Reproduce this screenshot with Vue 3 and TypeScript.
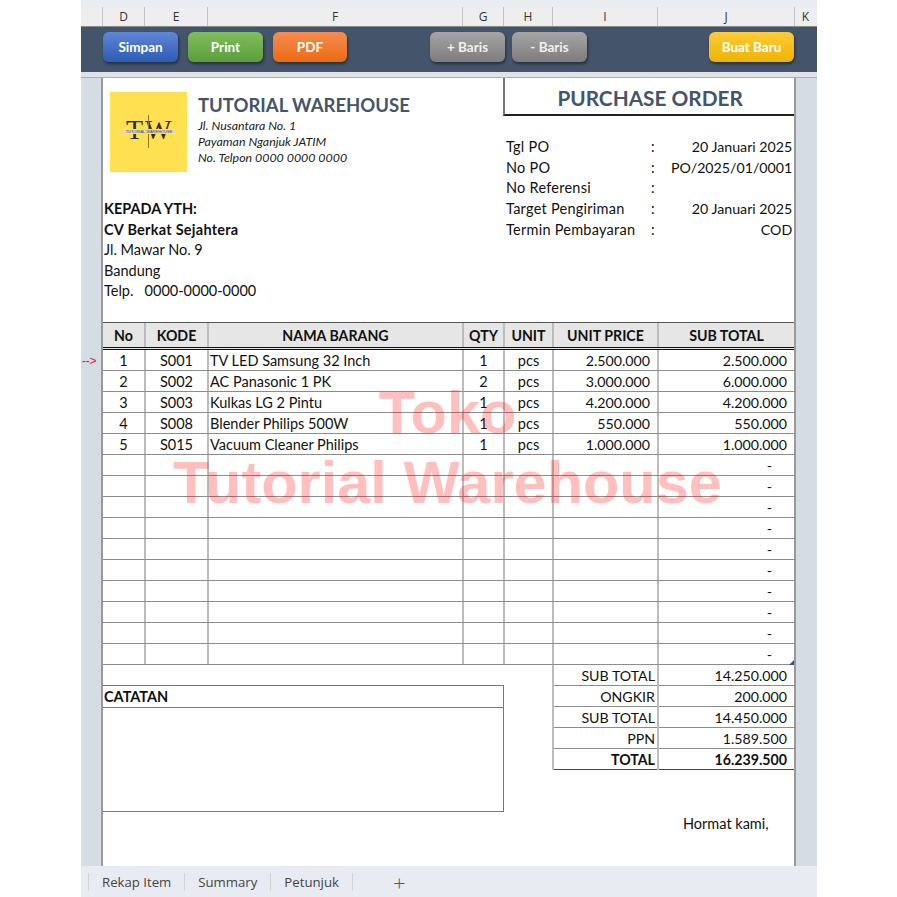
<script setup lang="ts">
const columns = [
  { label: 'D', width: 42 }, { label: 'E', width: 63 }, { label: 'F', width: 255 }, { label: 'G', width: 41 },
  { label: 'H', width: 49 }, { label: 'I', width: 105 }, { label: 'J', width: 137 }, { label: 'K', width: 22 },
]
const info = [
  ['Tgl PO', ':', '20 Januari 2025'],
  ['No PO', ':', 'PO/2025/01/0001'],
  ['No Referensi', ':', ''],
  ['Target Pengiriman', ':', '20 Januari 2025'],
  ['Termin Pembayaran', ':', 'COD'],
]
const heads = ['No', 'KODE', 'NAMA BARANG', 'QTY', 'UNIT', 'UNIT PRICE', 'SUB TOTAL']
const items = [
  ['1', 'S001', 'TV LED Samsung 32 Inch', '1', 'pcs', '2.500.000', '2.500.000'],
  ['2', 'S002', 'AC Panasonic 1 PK', '2', 'pcs', '3.000.000', '6.000.000'],
  ['3', 'S003', 'Kulkas LG 2 Pintu', '1', 'pcs', '4.200.000', '4.200.000'],
  ['4', 'S008', 'Blender Philips 500W', '1', 'pcs', '550.000', '550.000'],
  ['5', 'S015', 'Vacuum Cleaner Philips', '1', 'pcs', '1.000.000', '1.000.000'],
]
const blanks = Array.from({ length: 10 }, (_, i) => i)
const totals = [
  ['SUB TOTAL', '14.250.000', false],
  ['ONGKIR', '200.000', false],
  ['SUB TOTAL', '14.450.000', false],
  ['PPN', '1.589.500', false],
  ['TOTAL', '16.239.500', true],
] as const
const tabs = ['Rekap Item', 'Summary', 'Petunjuk']
</script>

<template>
  <div class="screen">
    <div class="app">
      <div class="strip"></div>
      <div class="colhead">
        <div class="corner"></div>
        <div v-for="c in columns" :key="c.label" class="colcell" :style="{ width: c.width + 'px' }">{{ c.label }}</div>
      </div>
      <div class="toolbar">
        <button class="btn blue">Simpan</button>
        <button class="btn green">Print</button>
        <button class="btn orange">PDF</button>
        <button class="btn gray add">+ Baris</button>
        <button class="btn gray minus">- Baris</button>
        <button class="btn yellow">Buat Baru</button>
      </div>
      <div class="band"></div>
      <div class="sheet">
        <div class="side left"><span class="arrow">--&gt;</span></div>
        <div class="page">
          <div class="head">
            <div class="head-left">
              <div class="brand">
                <div class="logo">
                  <span class="logo-letters">T W</span>
                  <span class="logo-bar"></span>
                  <span class="logo-strip">TUTORIAL WAREHOUSE</span>
                </div>
                <div class="brand-text">
                  <div class="company">TUTORIAL WAREHOUSE</div>
                  <div class="addr">Jl. Nusantara No. 1</div>
                  <div class="addr">Payaman Nganjuk JATIM</div>
                  <div class="addr">No. Telpon 0000 0000 0000</div>
                </div>
              </div>
              <div class="to">
                <div class="b">KEPADA YTH:</div>
                <div class="b cv">CV Berkat Sejahtera</div>
                <div>Jl. Mawar No. 9</div>
                <div>Bandung</div>
                <div>Telp.&nbsp;&nbsp; 0000-0000-0000</div>
              </div>
            </div>
            <div class="head-right">
              <div class="po-title">PURCHASE ORDER</div>
              <div class="info">
                <div v-for="r in info" :key="r[0]" class="info-row">
                  <span class="info-label">{{ r[0] }}</span>
                  <span class="info-colon">{{ r[1] }}</span>
                  <span class="info-value">{{ r[2] }}</span>
                </div>
              </div>
            </div>
          </div>

          <div class="tbl">
            <div class="row th">
              <div v-for="h in heads" :key="h" class="cell">{{ h }}</div>
            </div>
            <div v-for="it in items" :key="it[0]" class="row">
              <div class="cell">{{ it[0] }}</div>
              <div class="cell">{{ it[1] }}</div>
              <div class="cell name">{{ it[2] }}</div>
              <div class="cell">{{ it[3] }}</div>
              <div class="cell">{{ it[4] }}</div>
              <div class="cell num">{{ it[5] }}</div>
              <div class="cell num">{{ it[6] }}</div>
            </div>
            <div v-for="b in blanks" :key="b" class="row">
              <div v-for="n in 6" :key="n" class="cell"></div>
              <div class="cell num dash">-</div>
            </div>
            <span class="corner-mark"></span>
          </div>

          <div class="foot">
            <div class="notes">
              <div class="notes-head">CATATAN</div>
            </div>
            <div class="foot-right">
              <div class="totals">
                <div v-for="(t, i) in totals" :key="i" class="tot-row" :class="{ b: t[2] }">
                  <div class="tot-label">{{ t[0] }}</div>
                  <div class="tot-value">{{ t[1] }}</div>
                </div>
              </div>
              <div class="regards">Hormat kami,</div>
            </div>
          </div>
          <div class="watermark">
            <div>Toko</div>
            <div>Tutorial Warehouse</div>
          </div>
        </div>
        <div class="side"></div>
      </div>
      <div class="tabs">
        <span class="tab-sep"></span>
        <template v-for="t in tabs" :key="t">
          <span class="tab">{{ t }}</span>
          <span class="tab-sep"></span>
        </template>
        <span class="plus">+</span>
      </div>
    </div>
  </div>
</template>

<style scoped>
.screen { width: 897px; height: 897px; background: #fff; overflow: hidden; }
.app { width: 736px; height: 897px; margin-left: 81px; display: flex; flex-direction: column; font-family: Lato, "Liberation Sans", sans-serif; color: #111; }
.strip { height: 7px; background: #e9edf2; flex: none; }
.colhead { flex: none; display: flex; background: #eeeeee; border-bottom: 1px solid #8a8a8a; height: 19px; font-size: 12px; font-family: "Open Sans", sans-serif; color: #333; }
.corner { width: 21px; flex: none; }
.colcell { flex: none; box-sizing: border-box; display: flex; align-items: center; justify-content: center; border-left: 1px solid #c4c4c4; }
.toolbar { height: 45px; flex: none; background: #44546a; display: flex; align-items: flex-start; padding: 5px 0 0 22px; box-sizing: border-box; }
.btn { width: 75px; height: 30px; border: none; border-radius: 6px; color: #fff; font: bold 13.5px Lato, sans-serif; padding: 0; box-shadow: 1px 2px 3px rgba(0,0,0,.45); margin-right: 10px; flex: none; }
.blue { background: linear-gradient(#5f87d6, #2c5cb4); }
.green { background: linear-gradient(#80bd5e, #5c9e39); }
.orange { background: linear-gradient(#f58d50, #ec6a12); width: 74px; }
.gray { background: linear-gradient(#a6a6a6, #7c7c7c); color: #f0f0f0; }
.yellow { background: linear-gradient(#ffcb38, #eeb300); width: 85px; margin: 0; }
.add { margin-left: 73px; margin-right: 7px; width: 75px; }
.minus { margin-right: 122px; }
.band { height: 6px; flex: none; background: #dfe2e6; border-bottom: 1px solid #a9adb2; box-sizing: border-box; }
.sheet { flex: 1; min-height: 0; display: flex; }
.side { flex: 1; background: #d6dce4; }
.side.left { flex: none; width: 20px; position: relative; }
.arrow { position: absolute; left: 1px; top: 276px; color: #f01030; font-size: 12px; line-height: 14px; font-family: "Liberation Sans", sans-serif; letter-spacing: -.3px; }
.page { width: 695px; flex: none; box-sizing: border-box; border-left: 2px solid #9a9a9a; border-right: 2px solid #9a9a9a; background: #fff; position: relative; overflow: hidden; }
.head { height: 244px; display: flex; font-size: 14.5px; }
.head-left { width: 400px; flex: none; }
.brand { display: flex; padding: 14px 0 0 7px; }
.logo { width: 77px; height: 80px; background: #ffe050; position: relative; flex: none; overflow: hidden; }
.logo-letters { position: absolute; left: 16px; top: 24px; white-space: nowrap; font: 28px/28px "Liberation Serif", serif; word-spacing: -4px; color: #2f2c18; }
.logo-bar { position: absolute; left: 38px; top: 23px; width: 1px; height: 33px; background: #8a7a20; }
.logo-strip { position: absolute; left: 12px; top: 37px; width: 54px; height: 5px; background: #e2dcb8; color: #444; font: 4px/5px "Liberation Sans", sans-serif; text-align: center; white-space: nowrap; overflow: hidden; }
.brand-text { margin-left: 11px; }
.company { font-size: 18.5px; font-weight: 700; color: #44546a; line-height: 26px; }
.addr { font-style: italic; font-size: 12.4px; line-height: 16px; color: #222; }
.addr:first-of-type { margin-top: 4px; }
.to { margin: 27px 0 0 1px; line-height: 20.5px; }
.b { font-weight: 700; }
.cv { letter-spacing: .25px; }
.head-right { flex: 1; }
.po-title { height: 38px; box-sizing: border-box; border-left: 2px solid #777; border-bottom: 2px solid #222; font-size: 20.8px; font-weight: 700; color: #44546a; display: flex; align-items: center; justify-content: center; padding-top: 3px; }
.info { margin-top: 21px; padding-left: 3px; padding-right: 3px; }
.info-row { display: flex; height: 20.7px; line-height: 20.7px; }
.info-label { width: 145px; flex: none; letter-spacing: .25px; }
.info-colon { width: 20px; flex: none; }
.info-value { flex: 1; text-align: right; white-space: nowrap; font-size: 14.2px; }
.tbl { position: relative; border-top: 1px solid #555; }
.row { display: grid; grid-template-columns: 41px 63px 255px 41px 49px 105px 137px; height: 21px; border-bottom: 1px solid #8c8c8c; box-sizing: border-box; font-size: 14.5px; }
.th { height: 27px; background: #e7e6e6; font-weight: 700; font-size: 14.2px; border-bottom: 3px double #111; }
.cell { display: flex; align-items: center; justify-content: center; border-left: 2px solid #bcbcbc; white-space: nowrap; overflow: hidden; }
.cell:first-child { border-left: none; }
.th .cell { padding-top: 1px; }
.name { justify-content: flex-start; padding-left: 1px; }
.num { justify-content: flex-end; padding-right: 7px; font-size: 14.2px; }
.dash { padding-right: 22px; }
.corner-mark { position: absolute; right: 0; bottom: 0; width: 0; height: 0; border-left: 5px solid transparent; border-bottom: 5px solid #3a4f9a; }
.foot { display: flex; font-size: 14.5px; }
.notes { width: 401px; margin-top: 20px; height: 127px; box-sizing: border-box; border: 1px solid #777; border-left: none; flex: none; }
.notes-head { height: 22px; line-height: 21px; border-bottom: 1px solid #777; box-sizing: border-box; font-weight: 700; padding-left: 1px; }
.foot-right { margin-left: 48px; width: 242px; flex: none; }
.totals { border-left: 2px solid #bcbcbc; }
.tot-row { display: grid; grid-template-columns: 103px 137px; height: 21px; border-bottom: 1px solid #8c8c8c; box-sizing: border-box; font-size: 14.2px; }
.tot-row:last-child { border-bottom-color: #444; }
.tot-label { text-align: right; line-height: 21px; padding-right: 2px; }
.tot-value { text-align: right; line-height: 21px; border-left: 2px solid #bcbcbc; padding-right: 7px; }
.regards { margin: 43px 0 0 131px; line-height: 21px; white-space: nowrap; }
.watermark { position: absolute; left: -1px; right: 1px; top: 300px; text-align: center; font: bold 59.5px/70px "Liberation Sans", sans-serif; color: rgba(255, 0, 0, .25); pointer-events: none; }
.tabs { height: 31px; flex: none; background: #e8ebf2; display: flex; align-items: center; font-family: "Open Sans", sans-serif; font-size: 13.2px; color: #444; padding-left: 7px; }
.tab { padding: 0 13px; }
.tab-sep { width: 1px; height: 18px; background: #cfd3da; flex: none; }
.plus { margin-left: 40px; font-size: 22px; font-weight: 300; line-height: 22px; color: #555; }
</style>
